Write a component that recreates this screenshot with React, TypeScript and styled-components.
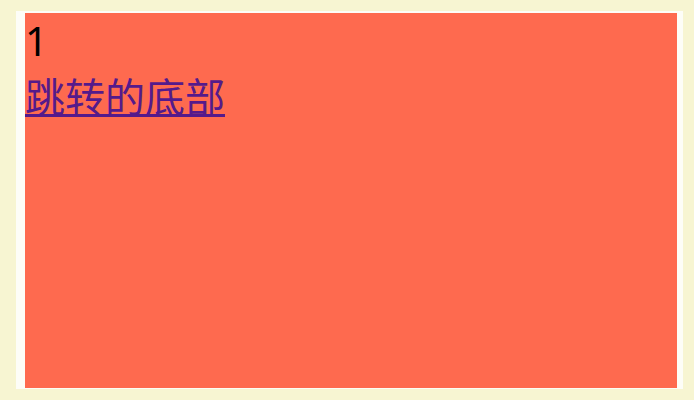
import React from "react";
import styled, { createGlobalStyle } from "styled-components";

const Global = createGlobalStyle`
  html, body {
    margin: 0;
    padding: 0;
    height: 100%;
    background: #f7f5d2;
  }
  #root { height: 100%; }
`;

const Frame = styled.div`
  box-sizing: border-box;
  height: 100%;
  padding: 11px 11px 11px 16px;
  display: flex;
`;

const Sheet = styled.div`
  box-sizing: border-box;
  flex: 1;
  background: #fdfdf7;
  padding: 2px 6px 1px 9px;
  display: flex;
`;

const Panel = styled.div`
  flex: 1;
  background: #fe6a4f;
  font-family: "Noto Sans", "Noto Sans CJK SC", sans-serif;
  font-size: 40px;
  color: #000;
`;

const Num = styled.div`
  line-height: 56px;
`;

const Jump = styled.a`
  display: inline-block;
  color: #551a8b;
  text-decoration: underline;
  text-decoration-thickness: 3px;
  text-underline-offset: 2px;
  font-family: "Noto Sans CJK SC", sans-serif;
  line-height: 44px;
`;

export default function App() {
  return (
    <>
      <Global />
      <Frame>
        <Sheet>
          <Panel>
            <Num>1</Num>
            <Jump href="#bottom">跳转的底部</Jump>
          </Panel>
        </Sheet>
      </Frame>
    </>
  );
}
